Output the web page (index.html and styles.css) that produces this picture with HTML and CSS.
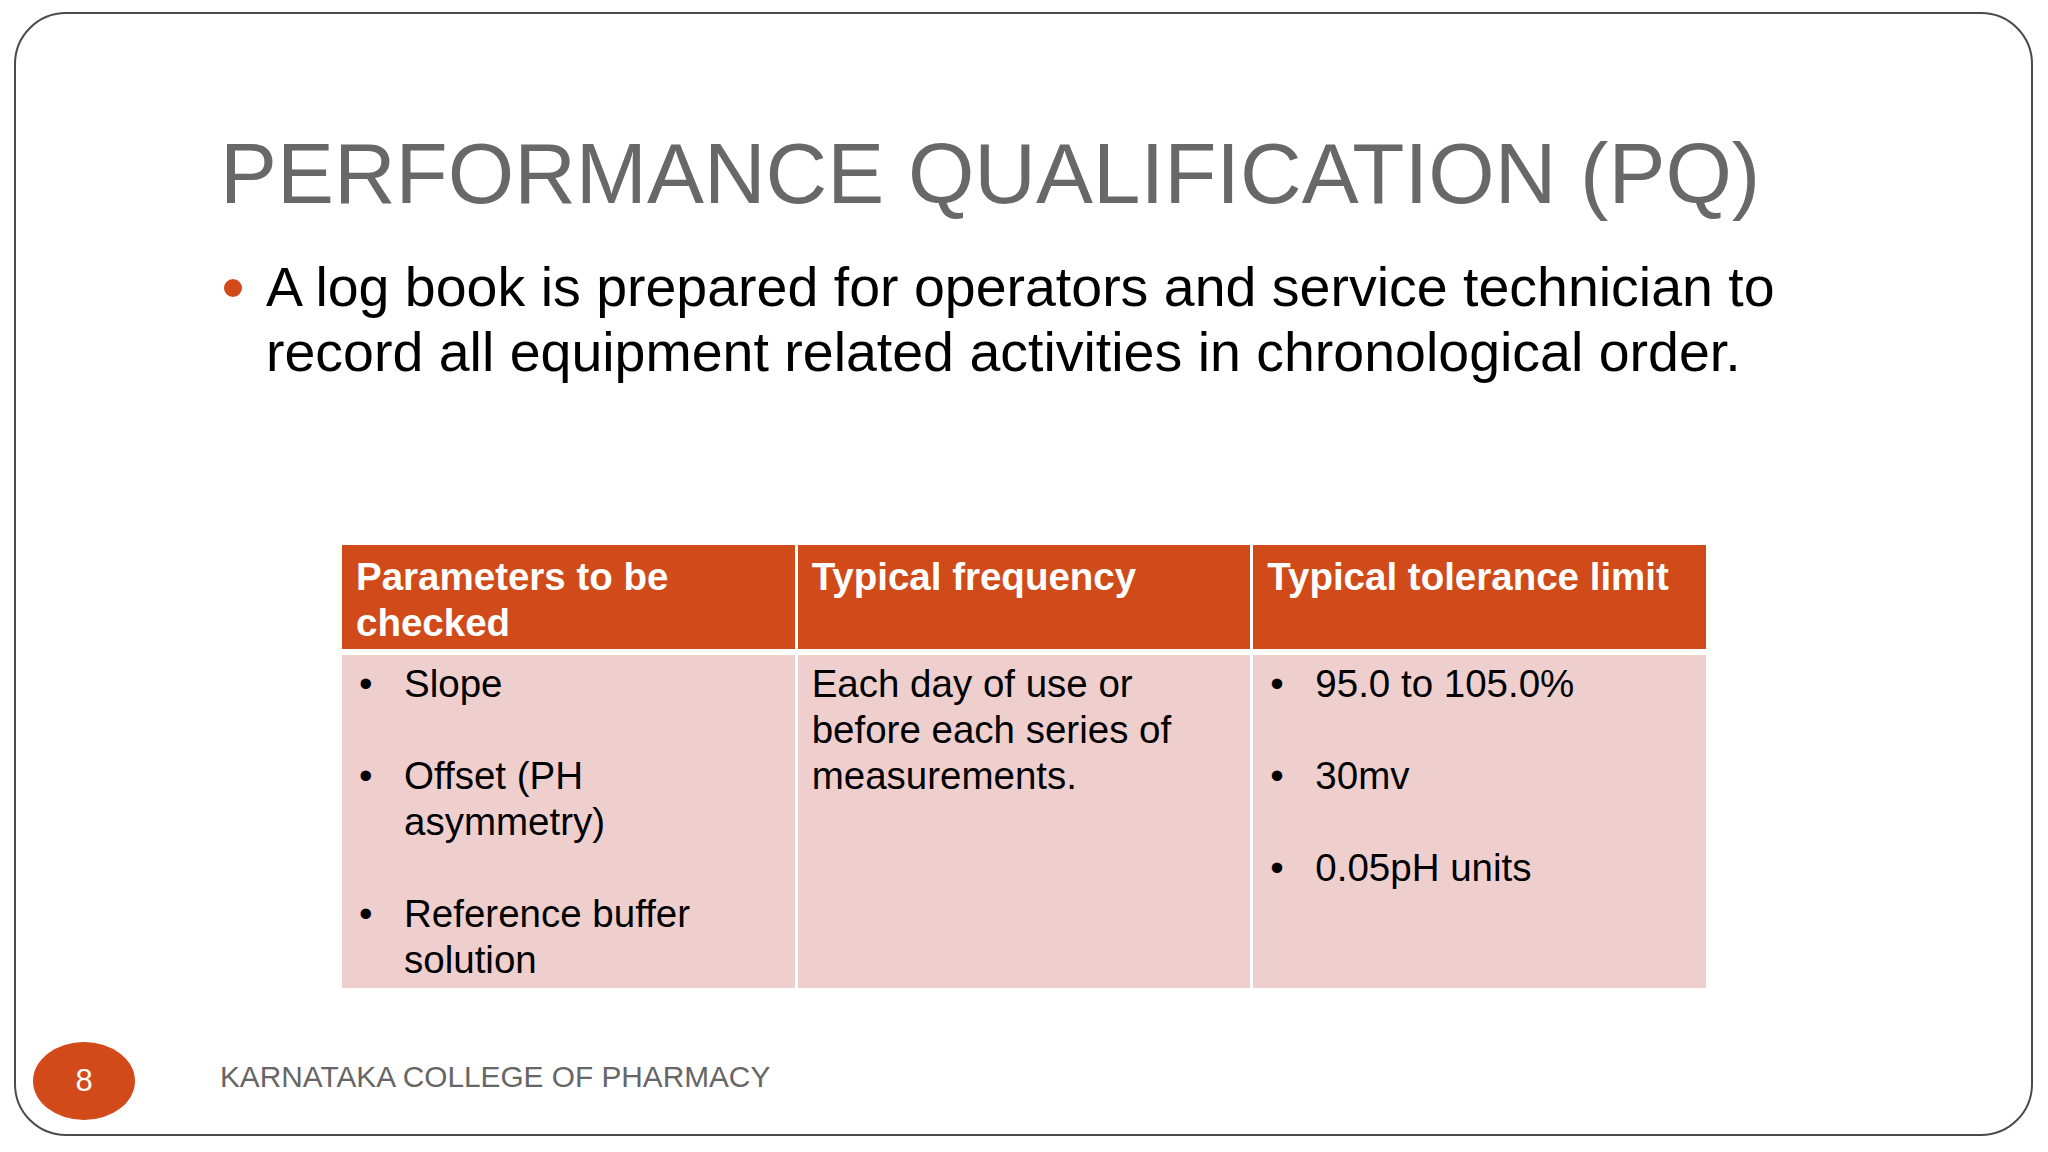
FILE: index.html
```html
<!DOCTYPE html>
<html lang="en">
<head>
<meta charset="utf-8">
<title>Performance Qualification (PQ)</title>
<link rel="stylesheet" href="styles.css">
</head>
<body>
<div class="slide">
  <div class="content">
    <h1 class="title">PERFORMANCE QUALIFICATION (PQ)</h1>
    <div class="point">
      <span class="dot"></span>
      <p class="point-text">A log book is prepared for operators and service technician to record all equipment related activities in chronological order.</p>
    </div>
  </div>

  <div class="table">
    <div class="th">Parameters to be checked</div>
    <div class="th">Typical frequency</div>
    <div class="th">Typical tolerance limit</div>

    <div class="td">
      <ul class="blist">
        <li><span class="b">•</span><span>Slope</span></li>
        <li><span class="b">•</span><span>Offset (PH asymmetry)</span></li>
        <li><span class="b">•</span><span>Reference buffer solution</span></li>
      </ul>
    </div>
    <div class="td">
      <p class="cell-text">Each day of use or before each series of measurements.</p>
    </div>
    <div class="td">
      <ul class="blist">
        <li><span class="b">•</span><span>95.0 to 105.0%</span></li>
        <li><span class="b">•</span><span>30mv</span></li>
        <li><span class="b">•</span><span>0.05pH units</span></li>
      </ul>
    </div>
  </div>

  <div class="footer">
    <div class="num">8</div>
    <div class="org">KARNATAKA COLLEGE OF PHARMACY</div>
  </div>
</div>
</body>
</html>
```

FILE: styles.css
```css
* { box-sizing: border-box; }

html, body {
  margin: 0;
  padding: 0;
  background: #ffffff;
}

body {
  width: 2048px;
  height: 1152px;
  padding: 12px 0 0 14px;
  font-family: "Liberation Sans", Arial, sans-serif;
  overflow: hidden;
}

.slide {
  width: 2019px;
  height: 1124px;
  border: 2px solid #4a4a4a;
  border-radius: 52px;
  display: flex;
  flex-direction: column;
  padding-bottom: 14px;
}

.content {
  padding-left: 204px;
  padding-top: 118px;
}

.title {
  margin: 0;
  font-size: 85.4px;
  line-height: 84px;
  font-weight: normal;
  color: #686868;
  white-space: nowrap;
}

.point {
  display: flex;
  align-items: flex-start;
  margin-top: 38.5px;
}

.dot {
  flex: none;
  width: 18px;
  height: 18px;
  border-radius: 50%;
  background: #d2491a;
  margin-left: 4px;
  margin-top: 24.5px;
}

.point-text {
  margin: 0 0 0 24px;
  font-size: 55.5px;
  line-height: 65px;
  color: #000000;
  width: 1560px;
}

.table {
  margin-left: 326px;
  margin-top: 160px;
  width: 1364px;
  display: grid;
  grid-template-columns: repeat(3, 1fr);
  column-gap: 3px;
  row-gap: 6px;
  font-size: 38.5px;
  line-height: 46px;
}

.th {
  background: #d14a19;
  color: #ffffff;
  font-weight: bold;
  padding: 9px 14px 3px 14px;
}

.td {
  background: #efcfcd;
  color: #000000;
  padding: 6px 14px 5px 14px;
}

.cell-text {
  margin: 0;
}

.blist {
  list-style: none;
  margin: 0;
  padding: 0;
}

.blist li {
  display: flex;
  margin-bottom: 46px;
}

.blist li:last-child {
  margin-bottom: 0;
}

.blist .b {
  flex: none;
  width: 48px;
  padding-left: 3px;
}

.footer {
  margin-top: auto;
  display: flex;
  align-items: center;
}

.num {
  width: 102px;
  height: 78px;
  border-radius: 50%;
  background: #d2491a;
  color: #ffffff;
  font-size: 31px;
  display: flex;
  align-items: center;
  justify-content: center;
  margin-left: 17px;
}

.org {
  margin-left: 85px;
  font-size: 29.8px;
  line-height: 1.15;
  color: #666666;
  padding-bottom: 8px;
}
```
